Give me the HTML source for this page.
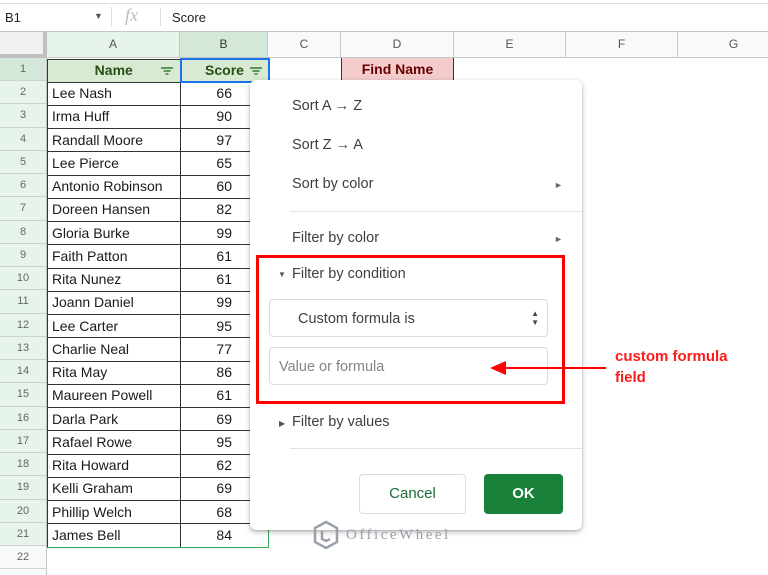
<!DOCTYPE html>
<html><head><meta charset="utf-8"><style>
*{box-sizing:border-box;margin:0;padding:0}
body{width:768px;height:575px;overflow:hidden;background:#fff;font-family:"Liberation Sans",Arial,sans-serif;position:relative}
.abs{position:absolute}
#topline{left:0;top:0;width:768px;height:4px;background:#fff;border-bottom:1px solid #e0e0e0}
#fbar{left:0;top:4px;width:768px;height:28px;border-bottom:1px solid #c7c7c7;font-size:13px;color:#222}
#colh{left:0;top:32px;width:768px;height:26px;background:#f8f9fa;border-bottom:1px solid #c7c7c7}
.ch{position:absolute;top:0;height:25px;line-height:25px;text-align:center;font-size:12px;color:#555;border-right:1px solid #c7c7c7}
#rowh{left:0;top:58px;width:47px;height:517px;background:#f8f9fa;border-right:1px solid #c7c7c7}
.rh{position:absolute;left:0;width:46px;text-align:center;font-size:11px;color:#666;border-bottom:1px solid #d0d0d0;background:#e6f4ea}
table{border-collapse:collapse;position:absolute;left:47px;top:58px;font-size:14px;color:#1a1a1a}
td{border:1px solid #333;padding:0 4px;height:23.25px;line-height:21px;background:#fff}
td.b{text-align:right;padding-right:36px}
tr.h td{background:#d9ead3;color:#274e13;font-weight:bold;text-align:center;height:23px;border-color:#333;position:relative}
#menu{left:250px;top:80px;width:332px;height:450px;background:#fff;border-radius:6px;box-shadow:0 2px 6px rgba(0,0,0,.25),0 1px 2px rgba(0,0,0,.15)}
.mi{position:absolute;left:42px;font-size:14.5px;color:#3c4043}
.arr{position:absolute;left:304px;font-size:9px;color:#666}
.sep{position:absolute;left:40px;width:292px;height:1px;background:#e3e3e3}
.fi{position:absolute;top:6px}
</style></head><body>
<div class="abs" id="topline"></div>
<div class="abs" id="fbar">
 <span class="abs" style="left:5px;top:6px">B1</span>
 <span class="abs" style="left:94px;top:7px;font-size:9px;color:#555">▼</span>
 <div class="abs" style="left:111px;top:3px;width:1px;height:20px;background:#ddd"></div>
 <span class="abs" style="left:125px;top:1px;font-family:'Liberation Serif',serif;font-style:italic;font-size:18px;color:#bbb">fx</span>
 <div class="abs" style="left:160px;top:4px;width:1px;height:18px;background:#ddd"></div>
 <span class="abs" style="left:172px;top:6px">Score</span>
</div>
<div class="abs" id="colh">
 <div class="ch" style="left:0;width:47px;background:#f1f1f1;border-right:4px solid #c0c0c0;border-bottom:4px solid #c0c0c0;height:26px"></div>
 <div class="ch" style="left:47px;width:133px;background:#e6f4ea">A</div>
 <div class="ch" style="left:180px;width:88px;background:#d3e8d9;color:#333">B</div>
 <div class="ch" style="left:268px;width:73px">C</div>
 <div class="ch" style="left:341px;width:113px">D</div>
 <div class="ch" style="left:454px;width:112px">E</div>
 <div class="ch" style="left:566px;width:112px">F</div>
 <div class="ch" style="left:678px;width:112px">G</div>
</div>
<div class="abs" id="rowh">
<div class="rh" style="top:0;height:23px;line-height:22px;background:#d3e8d9">1</div>
<div class="rh" style="top:23px;height:23.25px;line-height:22px">2</div>
<div class="rh" style="top:46.25px;height:23.25px;line-height:22px">3</div>
<div class="rh" style="top:69.5px;height:23.25px;line-height:22px">4</div>
<div class="rh" style="top:92.75px;height:23.25px;line-height:22px">5</div>
<div class="rh" style="top:116px;height:23.25px;line-height:22px">6</div>
<div class="rh" style="top:139.25px;height:23.25px;line-height:22px">7</div>
<div class="rh" style="top:162.5px;height:23.25px;line-height:22px">8</div>
<div class="rh" style="top:185.75px;height:23.25px;line-height:22px">9</div>
<div class="rh" style="top:209px;height:23.25px;line-height:22px">10</div>
<div class="rh" style="top:232.25px;height:23.25px;line-height:22px">11</div>
<div class="rh" style="top:255.5px;height:23.25px;line-height:22px">12</div>
<div class="rh" style="top:278.75px;height:23.25px;line-height:22px">13</div>
<div class="rh" style="top:302px;height:23.25px;line-height:22px">14</div>
<div class="rh" style="top:325.25px;height:23.25px;line-height:22px">15</div>
<div class="rh" style="top:348.5px;height:23.25px;line-height:22px">16</div>
<div class="rh" style="top:371.75px;height:23.25px;line-height:22px">17</div>
<div class="rh" style="top:395px;height:23.25px;line-height:22px">18</div>
<div class="rh" style="top:418.25px;height:23.25px;line-height:22px">19</div>
<div class="rh" style="top:441.5px;height:23.25px;line-height:22px">20</div>
<div class="rh" style="top:464.75px;height:23.25px;line-height:22px">21</div>
<div class="rh" style="top:488px;height:23px;line-height:22px;background:#f8f9fa">22</div>
</div>
<table>
<tr class="h"><td style="width:133px">Name <svg class="fi" style="left:113px" width="12" height="10" viewBox="0 0 12 10"><path d="M0 2H12M2.5 5H9.5M4.5 8H7.5" stroke="#2e7d32" stroke-width="1.5"/></svg></td><td style="width:88px;border:2px solid #1a73e8;padding:0">Score <svg class="fi" style="left:68px" width="12" height="10" viewBox="0 0 12 10"><path d="M0 2H12M2.5 5H9.5M4.5 8H7.5" stroke="#2e7d32" stroke-width="1.5"/></svg></td></tr>
<tr><td>Lee Nash</td><td class="b">66</td></tr>
<tr><td>Irma Huff</td><td class="b">90</td></tr>
<tr><td>Randall Moore</td><td class="b">97</td></tr>
<tr><td>Lee Pierce</td><td class="b">65</td></tr>
<tr><td>Antonio Robinson</td><td class="b">60</td></tr>
<tr><td>Doreen Hansen</td><td class="b">82</td></tr>
<tr><td>Gloria Burke</td><td class="b">99</td></tr>
<tr><td>Faith Patton</td><td class="b">61</td></tr>
<tr><td>Rita Nunez</td><td class="b">61</td></tr>
<tr><td>Joann Daniel</td><td class="b">99</td></tr>
<tr><td>Lee Carter</td><td class="b">95</td></tr>
<tr><td>Charlie Neal</td><td class="b">77</td></tr>
<tr><td>Rita May</td><td class="b">86</td></tr>
<tr><td>Maureen Powell</td><td class="b">61</td></tr>
<tr><td>Darla Park</td><td class="b">69</td></tr>
<tr><td>Rafael Rowe</td><td class="b">95</td></tr>
<tr><td>Rita Howard</td><td class="b">62</td></tr>
<tr><td>Kelli Graham</td><td class="b">69</td></tr>
<tr><td>Phillip Welch</td><td class="b">68</td></tr>
<tr><td style="border-bottom-color:#34a853;border-left-color:#333">James Bell</td><td class="b" style="border-bottom-color:#34a853;border-right-color:#34a853">84</td></tr>
</table>
<div class="abs" style="left:341px;top:58px;width:113px;height:23px;background:#f4cccc;border:1px solid #333;border-top:none;text-align:center;font-weight:bold;font-size:14px;color:#660000;line-height:22px">Find Name</div>

<div class="abs" id="menu">
 <div class="mi" style="top:18px">Sort A → Z</div>
 <div class="mi" style="top:57px">Sort Z → A</div>
 <div class="mi" style="top:96px">Sort by color</div><div class="arr" style="top:100px">►</div>
 <div class="sep" style="top:131px"></div>
 <div class="mi" style="top:150px">Filter by color</div><div class="arr" style="top:154px">►</div>
 <div class="abs" style="left:28px;top:190px;font-size:8px;color:#555">▼</div>
 <div class="mi" style="top:186px">Filter by condition</div>
 <div class="abs" style="left:19px;top:219px;width:279px;height:38px;border:1px solid #dadce0;border-radius:4px;font-size:14.5px;color:#3c4043;padding:11px 0 0 28px">Custom formula is<span style="position:absolute;right:8px;top:9px;font-size:8px;line-height:9px;color:#444">▲<br>▼</span></div>
 <div class="abs" style="left:19px;top:267px;width:279px;height:38px;border:1px solid #dadce0;border-radius:4px;font-size:14.5px;color:#80868b;padding:11px 0 0 9px">Value or formula</div>
 <div class="abs" style="left:29px;top:339px;font-size:8px;color:#555">▶</div>
 <div class="mi" style="top:334px">Filter by values</div>
 <div class="sep" style="top:368px"></div>
 <div class="abs" style="left:109px;top:394px;width:107px;height:40px;border:1px solid #dadce0;border-radius:4px;text-align:center;line-height:38px;font-size:15px;color:#1e6b3a">Cancel</div>
 <div class="abs" style="left:234px;top:394px;width:79px;height:40px;background:#188038;border-radius:4px;text-align:center;line-height:40px;font-size:15px;font-weight:bold;color:#fff">OK</div>
</div>

<div class="abs" style="left:256px;top:255px;width:309px;height:149px;border:3px solid #ff0000"></div>
<div class="abs" style="left:500px;top:367px;width:106px;height:2px;background:#ff0000"></div>
<div class="abs" style="left:490px;top:361px;width:0;height:0;border-top:7px solid transparent;border-bottom:7px solid transparent;border-right:16px solid #ff0000"></div>
<div class="abs" style="left:615px;top:346px;font-size:15px;font-weight:bold;color:#ff1a1a;line-height:21px">custom formula<br>field</div>

<div class="abs" style="left:313px;top:520px;width:26px;height:30px">
<svg width="26" height="30" viewBox="0 0 26 30"><path d="M13 2 L24 8 V22 L13 28 L2 22 V8 Z" fill="none" stroke="#9aa0aa" stroke-width="2.5"/><path d="M9 11 V19 L13 21 L17 19" fill="none" stroke="#9aa0aa" stroke-width="2.5"/></svg></div>
<div class="abs" style="left:346px;top:527px;font-family:'Liberation Serif',serif;font-size:15px;letter-spacing:2.5px;color:#9aa0aa">OfficeWheel</div>
</body></html>
